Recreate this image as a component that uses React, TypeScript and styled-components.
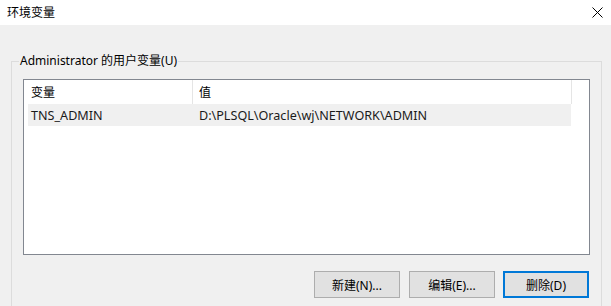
import React from 'react';
import styled, { createGlobalStyle } from 'styled-components';

const GlobalStyle = createGlobalStyle`
  html, body {
    margin: 0;
    padding: 0;
    background: #f0f0f0;
  }
  * {
    box-sizing: border-box;
  }
`;

const FONT = `"Noto Sans", "Noto Sans CJK SC", sans-serif`;

type Variable = {
  name: string;
  value: string;
};

const variables: Variable[] = [{ name: 'TNS_ADMIN', value: 'D:\\PLSQL\\Oracle\\wj\\NETWORK\\ADMIN' }];

const App = () => {
  return (
    <>
      <GlobalStyle />
      <Window>
        <TitleBar>
          <Title>环境变量</Title>
          <CloseButton aria-label='关闭'>
            <svg width='11' height='11' viewBox='0 0 11 11'>
              <path d='M0.5 0.5 L10.5 10.5 M10.5 0.5 L0.5 10.5' stroke='#000' strokeWidth='1' fill='none' />
            </svg>
          </CloseButton>
        </TitleBar>
        <Body>
          <GroupBox>
            <GroupLabel>Administrator 的用户变量(U)</GroupLabel>
            <ListView>
              <HeaderRow>
                <HeaderCell $indent={3}>变量</HeaderCell>
                <HeaderCell $indent={6}>值</HeaderCell>
              </HeaderRow>
              {variables.map((item) => (
                <DataRow key={item.name}>
                  <DataCell $indent={3}>{item.name}</DataCell>
                  <DataCell $indent={6}>{item.value}</DataCell>
                </DataRow>
              ))}
            </ListView>
            <ButtonRow>
              <DialogButton>新建(N)...</DialogButton>
              <DialogButton>编辑(E)...</DialogButton>
              <DialogButton $focused>删除(D)</DialogButton>
            </ButtonRow>
          </GroupBox>
        </Body>
      </Window>
    </>
  );
};

export default App;

const Window = styled.div`
  width: 611px;
  height: 306px;
  overflow: hidden;
  background: #f0f0f0;
  font-family: ${FONT};
  font-size: 12px;
  color: #000;
`;

const TitleBar = styled.div`
  height: 25px;
  background: #fff;
  display: flex;
  align-items: center;
  justify-content: space-between;
  padding: 0 8px 0 7px;
`;

const Title = styled.div`
  font-family: "Noto Sans CJK SC", sans-serif;
  font-size: 12px;
  line-height: 16px;
  padding-bottom: 1px;
`;

const CloseButton = styled.div`
  width: 11px;
  height: 11px;
  display: flex;
  margin-top: -1px;

  svg {
    display: block;
  }
`;

const Body = styled.div`
  padding: 28px 9px 0 11px;
`;

const GroupBox = styled.fieldset`
  margin: 0;
  min-width: 0;
  border: 1px solid #dcdcdc;
  padding: 10px 11px 24px 11px;
`;

const GroupLabel = styled.legend`
  margin-left: -4px;
  padding: 0 1px;
  line-height: 16px;
  font-size: 12px;
`;

const ListView = styled.div`
  height: 176px;
  border: 1px solid #828790;
  background: #fff;
  padding-left: 4px;
`;

const HeaderRow = styled.div`
  display: grid;
  grid-template-columns: 165px 379px;
  height: 24px;
`;

const HeaderCell = styled.div<{ $indent: number }>`
  display: flex;
  align-items: center;
  padding-left: ${({ $indent }) => $indent}px;
  border-right: 1px solid #e5e5e5;
  white-space: nowrap;
`;

const DataRow = styled.div`
  display: grid;
  grid-template-columns: 165px 378px;
  height: 22px;
  background: #f0f0f0;
  width: 543px;
`;

const DataCell = styled.div<{ $indent: number }>`
  display: flex;
  align-items: center;
  padding-left: ${({ $indent }) => $indent}px;
  white-space: nowrap;
  overflow: hidden;
  font-size: 12.6px;
  color: #1a1a1a;
`;

const ButtonRow = styled.div`
  display: flex;
  justify-content: flex-end;
  gap: 9px;
  margin-top: 16px;
  padding-right: 1px;
`;

const DialogButton = styled.button<{ $focused?: boolean }>`
  width: 86px;
  height: 27px;
  margin: 0;
  padding: 0;
  font-family: ${FONT};
  font-size: 12px;
  color: #000;
  background: #e1e1e1;
  border: ${({ $focused }) => ($focused ? '2px solid #0078d7' : '1px solid #adadad')};
  border-radius: 0;
  display: flex;
  align-items: center;
  justify-content: center;

  &:last-child {
    margin-left: -1px;
  }
`;
